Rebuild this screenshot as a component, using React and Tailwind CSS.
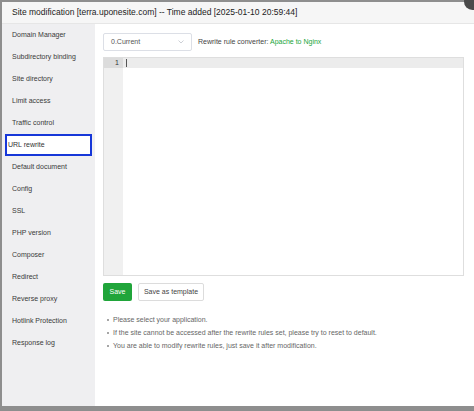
const menu = [
  "Domain Manager",
  "Subdirectory binding",
  "Site directory",
  "Limit access",
  "Traffic control",
  "URL rewrite",
  "Default document",
  "Config",
  "SSL",
  "PHP version",
  "Composer",
  "Redirect",
  "Reverse proxy",
  "Hotlink Protection",
  "Response log",
];

const tips = [
  "Please select your application.",
  "If the site cannot be accessed after the rewrite rules set, please try to reset to default.",
  "You are able to modify rewrite rules, just save it after modification.",
];

export default function App() {
  return (
    <div className="relative w-[474px] h-[411px] overflow-hidden bg-[#8e8e8e] pt-[2px] pl-[2px] pb-[5px] font-['Liberation_Sans',Arial,sans-serif]">
      <div className="flex flex-col h-full bg-white">
        <div className="h-[22px] shrink-0 flex items-center pl-[10px] bg-[#f6f6f6] border-b border-[#e6e6e6] text-[8.5px] font-medium text-[#222]">
          Site modification [terra.uponesite.com] -- Time added [2025-01-10 20:59:44]
        </div>
        <div className="flex flex-1 min-h-0">
          <div className="w-[93px] shrink-0 bg-[#efeff1]">
            {menu.map((m) =>
              m === "URL rewrite" ? (
                <div
                  key={m}
                  className="h-[22px] mx-[3px] flex items-center pl-[1px] border-2 border-[#1637d8] bg-white text-[7px] text-[#333]"
                >
                  {m}
                </div>
              ) : (
                <div key={m} className="h-[22px] flex items-center pl-[10px] text-[7px] text-[#3a3a3a]">
                  {m}
                </div>
              )
            )}
          </div>
          <div className="flex-1 pl-[8px] pr-[10px] pt-[9px]">
            <div className="flex items-center">
              <div className="w-[89px] h-[18px] flex items-center justify-between pl-[7px] pr-[7px] border border-[#dcdfe6] rounded-[2px] text-[7px] text-[#555]">
                <span>0.Current</span>
                <svg width="6" height="4" viewBox="0 0 6 4" fill="none">
                  <path d="M0.5 0.5L3 3L5.5 0.5" stroke="#c0c4cc" strokeWidth="0.8" />
                </svg>
              </div>
              <div className="ml-[6px] text-[7px] text-[#444]">
                Rewrite rule converter: <span className="text-[#20a53a]">Apache to Nginx</span>
              </div>
            </div>
            <div className="mt-[6px] h-[219px] flex border border-[#dedede]">
              <div className="w-[19px] bg-[#f0f0f0]">
                <div className="h-[10px] flex items-center justify-end pr-[4px] bg-[#dcdcdc] text-[7px] text-[#333]">
                  1
                </div>
              </div>
              <div className="flex-1">
                <div className="h-[10px] bg-[#ececec] pl-[3px] flex items-center">
                  <div className="w-px h-[8px] bg-[#555]" />
                </div>
              </div>
            </div>
            <div className="mt-[7px] flex items-center gap-[6px]">
              <div className="w-[29px] h-[18px] flex items-center justify-center bg-[#20a53a] rounded-[2px] text-[7px] font-medium text-white">
                Save
              </div>
              <div className="w-[66px] h-[18px] flex items-center justify-center border border-[#dcdcdc] rounded-[2px] text-[7px] text-[#444]">
                Save as template
              </div>
            </div>
            <ul className="mt-[13px]">
              {tips.map((t) => (
                <li key={t} className="h-[12.8px] flex items-center pl-[4px] text-[7px] text-[#666]">
                  <span className="w-[2px] h-[2px] rounded-full bg-[#888] mr-[4px]" />
                  {t}
                </li>
              ))}
            </ul>
          </div>
        </div>
      </div>
      <div className="absolute right-[-7px] top-[-7px] w-[17px] h-[17px] rounded-full bg-[#4a4a4a]" />
    </div>
  );
}
